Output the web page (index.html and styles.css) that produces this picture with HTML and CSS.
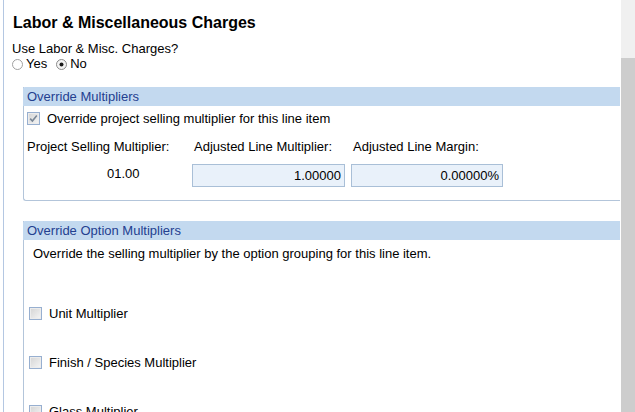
FILE: index.html
```html
<!DOCTYPE html>
<html lang="en">
<head>
<meta charset="utf-8">
<title>Labor &amp; Miscellaneous Charges</title>
<link rel="stylesheet" href="styles.css">
</head>
<body>
<div class="window">
  <main class="content">
    <h1 class="title">Labor &amp; Miscellaneous Charges</h1>
    <div class="question">Use Labor &amp; Misc. Charges?</div>
    <div class="radios">
      <label class="radio">
        <svg class="radio-icon" viewBox="0 0 11 11" width="11" height="11"><circle cx="5.5" cy="5.5" r="5" fill="#fff" stroke="#a0a0a0"/></svg>
        <span>Yes</span>
      </label>
      <label class="radio radio-no">
        <svg class="radio-icon" viewBox="0 0 11 11" width="11" height="11"><circle cx="5.5" cy="5.5" r="5" fill="#f4f4f4" stroke="#8a8a8a"/><circle cx="5.5" cy="5.5" r="2" fill="#1a1a1a"/></svg>
        <span>No</span>
      </label>
    </div>

    <section class="group group-first">
      <div class="group-head">Override Multipliers</div>
      <div class="group-body body-first">
        <label class="check-row">
          <span class="cb">
            <svg viewBox="0 0 11 11" width="11" height="11"><path d="M2.2 5.6 L4.4 8 L8.8 2.6" fill="none" stroke="#7a8796" stroke-width="1.6"/></svg>
          </span>
          <span>Override project selling multiplier for this line item</span>
        </label>
        <div class="mult-grid">
          <div class="mult-label first-col">Project Selling Multiplier:</div>
          <div class="mult-label second-col">Adjusted Line Multiplier:</div>
          <div class="mult-label third-col">Adjusted Line Margin:</div>
          <div class="mult-value">01.00</div>
          <div class="field field-mult">1.00000</div>
          <div class="field field-margin">0.00000%</div>
        </div>
      </div>
    </section>

    <section class="group group-second">
      <div class="group-head">Override Option Multipliers</div>
      <div class="group-body body-second">
        <div class="desc">Override the selling multiplier by the option grouping for this line item.</div>
        <label class="check-row option-row first-option"><span class="cb"></span><span>Unit Multiplier</span></label>
        <label class="check-row option-row"><span class="cb"></span><span>Finish / Species Multiplier</span></label>
        <label class="check-row option-row"><span class="cb"></span><span>Glass Multiplier</span></label>
      </div>
    </section>
  </main>
  <div class="scrollbar"><div class="thumb"></div></div>
</div>
</body>
</html>
```

FILE: styles.css
```css
html, body {
  margin: 0;
  padding: 0;
  background: #ffffff;
}

body {
  font-family: "Liberation Sans", Arial, sans-serif;
  font-size: 13px;
  color: #000;
  overflow: hidden;
}

.window {
  display: flex;
  width: 635px;
  height: 412px;
  padding-left: 3px;
  box-sizing: border-box;
  overflow: hidden;
}

.content {
  flex: 1;
  min-width: 0;
  border-left: 1px solid #b4c7e2;
  padding: 14px 1px 0 8px;
  overflow: hidden;
}

.title {
  margin: 0 0 9px 1px;
  font-size: 16px;
  line-height: 18px;
  font-weight: bold;
}

.question {
  line-height: 15px;
}

.radios {
  display: flex;
  line-height: 16px;
  height: 16px;
}

.radio {
  display: flex;
  align-items: center;
  gap: 3px;
}

.radio-icon {
  display: block;
  margin-top: 1px;
}

.radio-no {
  margin-left: 9px;
}

.group {
  margin-left: 11px;
  border-left: 1px solid #b3c5da;
  border-bottom: 1px solid #b3c5da;
  border-bottom-left-radius: 3px;
}

.group-first {
  margin-top: 15px;
}

.group-second {
  margin-top: 20px;
  border-bottom: none;
}

.group-head {
  height: 19px;
  line-height: 19px;
  margin-left: -1px;
  padding-left: 4px;
  background: #c3d9ef;
  color: #24408f;
  border-top-left-radius: 2px;
}

.group-body {
  padding-left: 3px;
}

.body-first {
  padding-top: 5px;
  padding-bottom: 13px;
}

.check-row {
  display: flex;
  align-items: center;
  gap: 7px;
  height: 15px;
  line-height: 15px;
}

.cb {
  width: 11px;
  height: 11px;
  border: 1px solid #97afd0;
  background: linear-gradient(135deg, #d4d4d4 0%, #e8e8e8 60%, #f6f6f6 100%);
  box-shadow: inset 0 0 0 1px #ececec;
  display: flex;
  align-items: center;
  justify-content: center;
  flex: none;
}

.cb svg {
  display: block;
}

.mult-grid {
  display: grid;
  grid-template-columns: 159px 153px 152px;
  column-gap: 6px;
  row-gap: 10px;
  margin-top: 13px;
}

.mult-label {
  line-height: 15px;
}

.second-col,
.third-col {
  padding-left: 2px;
}

.mult-value {
  padding-left: 80px;
  padding-top: 2px;
  line-height: 15px;
}

.field {
  height: 23px;
  box-sizing: border-box;
  border: 1px solid #a9bfd7;
  background: #e9f1fa;
  text-align: right;
  padding-right: 3px;
  line-height: 22px;
}

.body-second {
  padding-top: 6px;
  padding-left: 5px;
  height: 200px;
}

.desc {
  padding-left: 4px;
  line-height: 15px;
}

.option-row {
  margin-top: 34px;
}

.option-row.first-option {
  margin-top: 45px;
}

.scrollbar {
  width: 14px;
  flex: none;
  background: #f0f0f0;
  padding-top: 58px;
  box-sizing: border-box;
}

.thumb {
  height: 100%;
  background: #cdcdcd;
}
```
